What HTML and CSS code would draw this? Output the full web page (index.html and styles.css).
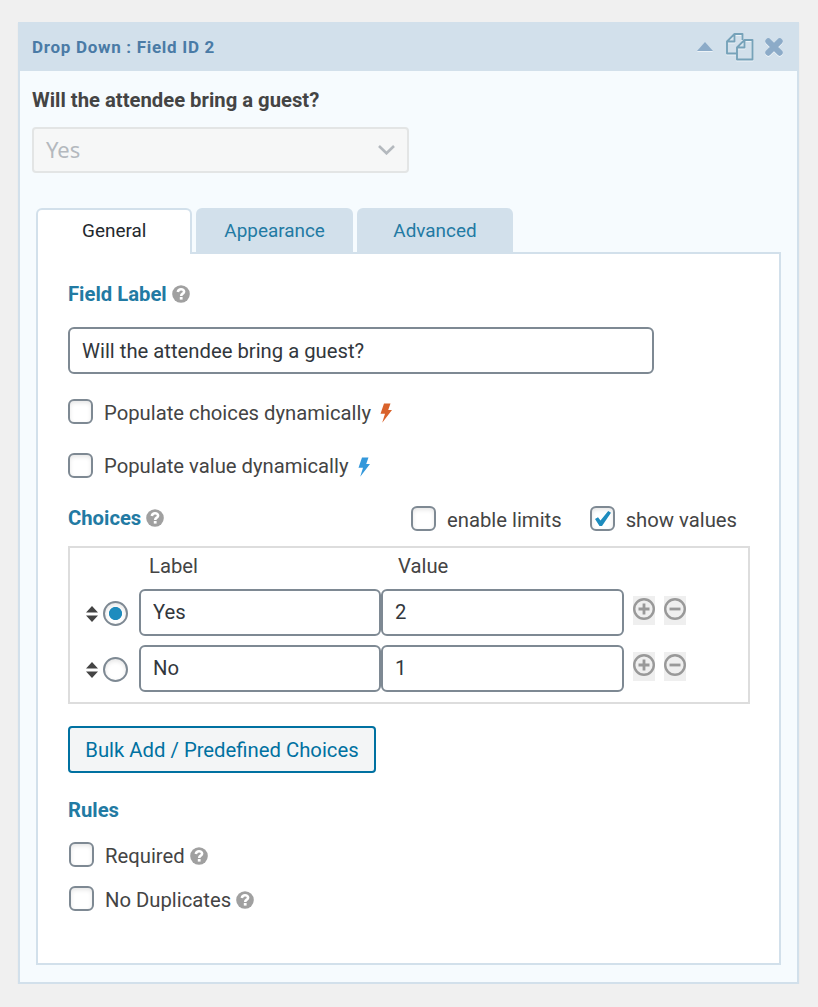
FILE: index.html
```html
<!DOCTYPE html>
<html lang="en">
<head>
    <meta charset="UTF-8">
    <meta name="viewport" content="width=device-width, initial-scale=1">
    <title>Drop Down : Field ID 2</title>
    <link rel="stylesheet" href="styles.css">
</head>
<body>
    <svg class="sprite" aria-hidden="true">
        <symbol id="help" viewBox="0 0 18 18">
            <circle cx="9" cy="9" r="8.8" fill="#a0a0a0"/>
            <path d="M5.800 6.900C6.200 5 7.400 4.200 9 4.200c1.900 0 3.100 1 3.100 2.500C12.100 8.800 9.200 8.600 9.200 10.900" fill="none" stroke="#fff" stroke-width="2.600"/>
            <rect x="7.800" y="12" width="2.800" height="2.600" fill="#fff"/>
        </symbol>
        <symbol id="bolt" viewBox="0 0 12 20">
            <path d="M4 0.500h6.500L8.200 7H12L2.200 19.700 5 10.700H0.500z" fill="currentColor"/>
        </symbol>
        <symbol id="sort" viewBox="0 0 12 16">
            <path d="M0 6.500L6 0l6 6.500zM0 9.500h12L6 16z" fill="#444"/>
        </symbol>
        <symbol id="plus" viewBox="0 0 22 22">
            <circle cx="11" cy="11" r="9.800" fill="none" stroke="#999" stroke-width="2.400"/>
            <path d="M5.500 11h11M11 5.500v11" stroke="#999" stroke-width="2.800"/>
        </symbol>
        <symbol id="minus" viewBox="0 0 22 22">
            <circle cx="11" cy="11" r="9.800" fill="none" stroke="#999" stroke-width="2.400"/>
            <path d="M5.500 11h11" stroke="#999" stroke-width="2.800"/>
        </symbol>
    </svg>

    <div class="field">
        <div class="field-header">
            <span class="field-title">Drop Down : Field ID 2</span>
            <div class="field-actions">
                <svg class="icon-toggle" viewBox="0 0 16 9"><path d="M0 9L8 0l8 9z" fill="#8cabc8"/></svg>
                <svg class="icon-copy" viewBox="0 0 28 28">
                    <path d="M10.500 20.500H1V8.500L8.500 1H16.500v6M8.500 1.500V8.500H1.500" fill="none" stroke="#76a2b9" stroke-width="1.900" stroke-linejoin="round"/>
                    <path d="M18.500 7H26.500V26.500H11V14.500zM18.500 7v7.500H11" fill="none" stroke="#76a2b9" stroke-width="1.900" stroke-linejoin="round"/>
                </svg>
                <svg class="icon-delete" viewBox="0 0 18 18"><path d="M3.300 3.300l11.400 11.400M14.700 3.300L3.300 14.700" stroke="#8cabc8" stroke-width="6" stroke-linecap="round"/></svg>
            </div>
        </div>

        <div class="field-body">
            <div class="preview-label">Will the attendee bring a guest?</div>
            <div class="preview-select">
                <span>Yes</span>
                <svg class="icon-chevron" viewBox="0 0 17 10"><path d="M1 1l7.500 7.300L16 1" fill="none" stroke="#b4b9be" stroke-width="2.600"/></svg>
            </div>

            <div class="tabs">
                <div class="tab tab-active">General</div>
                <div class="tab">Appearance</div>
                <div class="tab">Advanced</div>
            </div>

            <div class="panel">
                <div class="section-title">Field Label <svg class="help"><use href="#help"/></svg></div>
                <input type="text" class="text-input label-input" value="Will the attendee bring a guest?">

                <label class="check-row">
                    <input type="checkbox" class="checkbox">
                    <span>Populate choices dynamically</span>
                    <svg class="bolt bolt-orange"><use href="#bolt"/></svg>
                </label>
                <label class="check-row check-row-second">
                    <input type="checkbox" class="checkbox">
                    <span>Populate value dynamically</span>
                    <svg class="bolt bolt-blue"><use href="#bolt"/></svg>
                </label>

                <div class="choices-head">
                    <div class="section-title">Choices <svg class="help"><use href="#help"/></svg></div>
                    <div class="choices-options">
                        <label class="check-row"><input type="checkbox" class="checkbox"><span>enable limits</span></label>
                        <label class="check-row"><input type="checkbox" class="checkbox" checked><span>show values</span></label>
                    </div>
                </div>

                <div class="choices">
                    <div class="choices-labels">
                        <span>Label</span>
                        <span>Value</span>
                    </div>
                    <div class="choice">
                        <svg class="sort"><use href="#sort"/></svg>
                        <input type="radio" name="choice" class="radio" checked>
                        <input type="text" class="text-input choice-label" value="Yes">
                        <input type="text" class="text-input choice-value" value="2">
                        <button class="choice-btn"><svg><use href="#plus"/></svg></button>
                        <button class="choice-btn"><svg><use href="#minus"/></svg></button>
                    </div>
                    <div class="choice">
                        <svg class="sort"><use href="#sort"/></svg>
                        <input type="radio" name="choice" class="radio">
                        <input type="text" class="text-input choice-label" value="No">
                        <input type="text" class="text-input choice-value" value="1">
                        <button class="choice-btn"><svg><use href="#plus"/></svg></button>
                        <button class="choice-btn"><svg><use href="#minus"/></svg></button>
                    </div>
                </div>

                <button class="bulk-btn">Bulk Add / Predefined Choices</button>

                <div class="section-title rules-title">Rules</div>
                <div class="rules">
                    <label class="check-row"><input type="checkbox" class="checkbox"><span>Required</span><svg class="help"><use href="#help"/></svg></label>
                    <label class="check-row"><input type="checkbox" class="checkbox"><span>No Duplicates</span><svg class="help"><use href="#help"/></svg></label>
                </div>
            </div>
        </div>
    </div>
</body>
</html>
```
FILE: styles.css
```css
* {
    box-sizing: border-box;
    margin: 0;
    padding: 0;
}

body {
    font-family: Roboto, sans-serif;
    font-size: 20.25px;
    line-height: 26px;
    color: #444;
    background: #f0f0f0;
    padding: 22px 19px 0 18px;
}

svg {
    display: block;
    flex: none;
}

.sprite {
    display: none;
}

.field {
    height: 962px;
    border: 2px solid #d2e0eb;
    background: #f6fbfe;
    box-shadow: 0 1px 1px rgba(0, 0, 0, 0.08);
}

.field-header {
    display: flex;
    justify-content: space-between;
    align-items: center;
    height: 47px;
    padding: 0 14px 2px 12px;
    background: #d2e0eb;
}

.field-title {
    font-size: 17px;
    font-weight: 700;
    letter-spacing: 0.7px;
    color: #4a7ba6;
}

.field-actions {
    display: flex;
    align-items: center;
}

.field-actions svg {
    filter: drop-shadow(0 1px 0 rgba(255, 255, 255, 0.6));
}

.icon-toggle {
    width: 16px;
    height: 9px;
    margin-right: 13px;
}

.icon-copy {
    width: 28px;
    height: 28px;
    margin-right: 11px;
}

.icon-delete {
    width: 18px;
    height: 18px;
}

.field-body {
    padding: 16px 16px 0;
}

.preview-label {
    margin-left: -4px;
    font-weight: 700;
}

.preview-select {
    display: flex;
    justify-content: space-between;
    align-items: center;
    width: 377px;
    height: 46px;
    margin: 14px 0 0 -4px;
    padding: 0 12px;
    border: 2px solid #e3e5e5;
    border-radius: 4px;
    background: #f6f7f7;
    color: #b4b9be;
    font-family: "Noto Sans", sans-serif;
    font-size: 22px;
}

.preview-select span {
    padding-bottom: 3px;
}

.icon-chevron {
    width: 17px;
    height: 10px;
}

.tabs {
    display: flex;
    gap: 4px;
    margin-top: 35px;
}

.tab {
    width: 156.4px;
    height: 44px;
    border-radius: 6px 6px 0 0;
    background: #d2e0eb;
    color: #227aa3;
    font-size: 18.9px;
    line-height: 46px;
    text-align: center;
}

/* covers the top border of the panel */
.tab-active {
    height: 46px;
    margin-bottom: -2px;
    border: 2px solid #d2e0eb;
    border-bottom: 0;
    background: #fff;
    color: #23282d;
    line-height: 42px;
    z-index: 1;
}

.panel {
    height: 713px;
    padding: 27px 29px 0 30px;
    border: 2px solid #d2e0eb;
    background: #fff;
}

.section-title {
    display: flex;
    align-items: center;
    gap: 5px;
    font-weight: 700;
    color: #227aa3;
}

.help {
    width: 18px;
    height: 18px;
}

.text-input {
    height: 47px;
    padding: 0 12px;
    border: 2px solid #7e8993;
    border-radius: 6px;
    background: #fff;
    color: #32373c;
    font: 20.25px Roboto, sans-serif;
}

.label-input {
    display: block;
    width: 586px;
    margin: 20px 0 25px;
}

.check-row {
    display: flex;
    align-items: center;
    height: 25px;
}

.check-row span {
    margin-left: 11px;
    padding-top: 2px;
}

.check-row-second {
    margin-top: 29px;
}

.check-row-second span {
    padding-top: 0;
}

.checkbox,
.radio {
    appearance: none;
    flex: none;
    width: 25px;
    height: 25px;
    border: 2px solid #7e8993;
    border-radius: 6px;
    background: #fff;
    box-shadow: inset 0 2px 4px rgba(0, 0, 0, 0.1);
}

.checkbox:checked {
    background: #fff url("data:image/svg+xml,%3Csvg xmlns='http://www.w3.org/2000/svg' viewBox='0 0 21 21'%3E%3Cpath d='M3 11l3-1.700 2.500 3.200L16.200 3l2.800 1.800L10 18H7.500z' fill='%231e8cbe'/%3E%3C/svg%3E") center / 21px no-repeat;
}

.radio {
    border-radius: 50%;
}

.radio:checked {
    background: radial-gradient(circle, #1e8cbe 6.200px, #fff 6.900px);
}

.bolt {
    width: 12px;
    height: 20px;
    margin: 2px 0 0 9px;
}

.bolt-orange {
    color: #d9622b;
}

.bolt-blue {
    color: #3498db;
}

.choices-head {
    display: flex;
    justify-content: space-between;
    align-items: center;
    height: 25px;
    margin-top: 28px;
}

.choices-head .section-title {
    margin-bottom: 2px;
}

.choices-options {
    display: flex;
    gap: 28px;
    padding-right: 13px;
}

.choices {
    height: 158px;
    margin-top: 15px;
    padding: 5px 16px;
    border: 2px solid #ddd;
}

.choices-labels {
    display: grid;
    grid-template-columns: 249px 1fr;
    padding-left: 63px;
    margin-bottom: 10px;
}

.choice {
    display: flex;
    align-items: center;
    margin-bottom: 9px;
}

.choice .text-input {
    padding-bottom: 2px;
}

.sort {
    width: 12px;
    height: 16px;
    margin: 3px 5px 0 0;
}

.radio {
    margin: 2px 11px 0 0;
}

.choice-label {
    width: 242px;
}

.choice-value {
    width: 243px;
    margin-right: 9px;
}

.choice-btn {
    width: 22px;
    height: 29px;
    margin: -4px 9px 0 0;
    border: 0;
    background: #efefef;
}

.choice-btn svg {
    width: 22px;
    height: 22px;
    margin-bottom: 3px;
}

.bulk-btn {
    display: block;
    width: 308px;
    height: 47px;
    margin-top: 22px;
    border: 2px solid #0071a1;
    border-radius: 4px;
    background: #f3f5f6;
    color: #0071a1;
    font: 20.300px Roboto, sans-serif;
}

.rules-title {
    margin-top: 24px;
}

.rules {
    display: grid;
    gap: 19px;
    margin: 19px 0 0 1px;
}

.rules .help {
    margin: 2px 0 0 5px;
}
```
